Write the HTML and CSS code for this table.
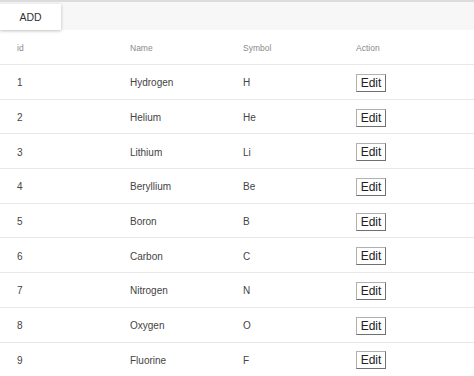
FILE: index.html
```html
<!DOCTYPE html>
<html>
<head>
<meta charset="utf-8">
<link rel="stylesheet" href="styles.css">
</head>
<body>
<div class="topline"></div>
<div class="toolbar"><button class="add">ADD</button></div>
<div class="table">
  <div class="row head"><div>id</div><div>Name</div><div>Symbol</div><div>Action</div></div>
  <div class="row"><div>1</div><div>Hydrogen</div><div>H</div><div><button class="edit">Edit</button></div></div>
  <div class="row"><div>2</div><div>Helium</div><div>He</div><div><button class="edit">Edit</button></div></div>
  <div class="row"><div>3</div><div>Lithium</div><div>Li</div><div><button class="edit">Edit</button></div></div>
  <div class="row"><div>4</div><div>Beryllium</div><div>Be</div><div><button class="edit">Edit</button></div></div>
  <div class="row"><div>5</div><div>Boron</div><div>B</div><div><button class="edit">Edit</button></div></div>
  <div class="row"><div>6</div><div>Carbon</div><div>C</div><div><button class="edit">Edit</button></div></div>
  <div class="row"><div>7</div><div>Nitrogen</div><div>N</div><div><button class="edit">Edit</button></div></div>
  <div class="row"><div>8</div><div>Oxygen</div><div>O</div><div><button class="edit">Edit</button></div></div>
  <div class="row"><div>9</div><div>Fluorine</div><div>F</div><div><button class="edit">Edit</button></div></div>
</div>
</body>
</html>
```
FILE: styles.css
```css
html, body {
  margin: 0;
  padding: 0;
  background: #fff;
  font-family: "Liberation Sans", Arial, sans-serif;
  color: #333;
  overflow: hidden;
}
.topline {
  height: 2px;
  background: #dcdcdc;
}
.toolbar {
  height: 28px;
  background: #f7f7f7;
  box-sizing: border-box;
  padding-top: 2px;
}
.add {
  display: block;
  width: 61px;
  height: 26px;
  margin: 0;
  border: none;
  background: #fff;
  box-shadow: 0 1px 3px rgba(0,0,0,0.25);
  font-family: "Liberation Sans", Arial, sans-serif;
  font-size: 10.5px;
  color: #333;
  padding: 0 0 1px;
}
.row {
  display: grid;
  grid-template-columns: 113px 113px 113px 1fr;
  align-items: center;
  height: 34.7px;
  box-sizing: border-box;
  border-bottom: 1px solid #e8e8e8;
  font-size: 10px;
  color: #444;
  padding-top: 2px;
}
.row > div {
  padding-left: 17px;
}
.row.head {
  height: 35px;
  font-size: 8.5px;
  color: #8a8a8a;
  padding-top: 1px;
}
.edit {
  margin: 0;
  width: 30px;
  height: 18px;
  padding: 0;
  background: #fff;
  border: 1px solid #b0b0b0;
  border-right-color: #707070;
  border-bottom-color: #707070;
  font-family: "Liberation Sans", Arial, sans-serif;
  font-size: 12px;
  color: #222;
  line-height: 16px;
}
```
